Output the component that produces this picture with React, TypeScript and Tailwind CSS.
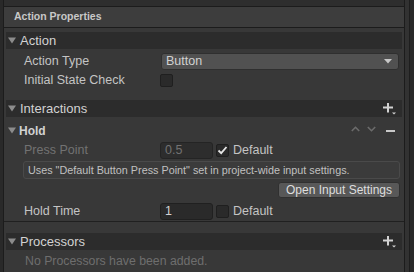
import React from "react";

const Fold = () => (
  <svg width="8" height="7" viewBox="0 0 8 7" className="shrink-0">
    <polygon points="0,0.5 8,0.5 4,6.5" fill="#8c8c8c" />
  </svg>
);

const Plus = () => (
  <svg width="13" height="12" viewBox="0 0 13 12">
    <rect x="0" y="3.5" width="10" height="2" fill="#d2d2d2" />
    <rect x="4" y="-0.5" width="2" height="10" fill="#d2d2d2" />
    <polygon points="9,9.5 13,9.5 11,11.5" fill="#d2d2d2" />
  </svg>
);

const Bar = ({ title, plus }: { title: string; plus?: boolean }) => (
  <div className="h-[17px] bg-[#2c2c2c] flex items-center pl-[2px] pr-[6px]">
    <Fold />
    <span className="ml-[4px] text-[13px] text-[#d2d2d2] leading-none">{title}</span>
    <div className="flex-1" />
    {plus && <Plus />}
  </div>
);

const Check = ({ checked }: { checked?: boolean }) => (
  <div className="w-[13px] h-[13px] rounded-[2px] bg-[#2a2a2a] border border-[#1f1f1f] flex items-center justify-center shrink-0">
    {checked && (
      <svg width="11" height="11" viewBox="0 0 11 11">
        <polyline points="1.5,5.5 4.2,8.2 9.5,2" fill="none" stroke="#e6e6e6" strokeWidth="1.8" />
      </svg>
    )}
  </div>
);

export default function App() {
  return (
    <div className="w-[414px] h-[272px] bg-[#292929] flex overflow-hidden font-['Liberation_Sans',Arial,sans-serif] text-[12.5px] text-[#c4c4c4]">
      <div className="w-[3px] shrink-0" />
      <div className="w-[402px] shrink-0 flex flex-col border-l border-r border-[#1c1c1c] bg-[#383838]">
        <div className="h-[6px] bg-[#2e2e2e] shrink-0" />
        <div className="h-[22px] shrink-0 border-t border-b border-[#1c1c1c] bg-[#3d3d3d] flex items-center pl-[10px]">
          <span className="text-[10.5px] font-bold text-[#c8c8c8]">Action Properties</span>
        </div>
        <div className="flex flex-col px-[2px]">
          <div className="mt-[4px]">
            <Bar title="Action" />
          </div>
          <div className="mt-[2px] h-[20px] flex items-center">
            <span className="w-[137px] ml-[18px] shrink-0">Action Type</span>
            <div className="w-[238px] h-[17px] rounded-[3px] bg-[#515151] border border-[#2f2f2f] flex items-center pl-[4px] pr-[6px]">
              <span className="text-[#d2d2d2]">Button</span>
              <div className="flex-1" />
              <svg width="8" height="5" viewBox="0 0 8 5">
                <polygon points="0,0 8,0 4,4.5" fill="#c8c8c8" />
              </svg>
            </div>
          </div>
          <div className="h-[18px] flex items-center">
            <span className="w-[136px] ml-[18px] shrink-0">Initial State Check</span>
            <Check />
          </div>
          <div className="mt-[11px]">
            <Bar title="Interactions" plus />
          </div>
          <div className="mt-[3px] h-[21px] flex items-center pl-[2px] pr-[7px]">
            <Fold />
            <span className="ml-[3px] font-bold text-[12px] text-[#d2d2d2]">Hold</span>
            <div className="flex-1" />
            <svg width="9" height="6" viewBox="0 0 9 6" className="mb-[3px]">
              <polyline points="0.8,5 4.5,1.3 8.2,5" fill="none" stroke="#6c6c6c" strokeWidth="1.6" />
            </svg>
            <svg width="9" height="6" viewBox="0 0 9 6" className="ml-[7px] mb-[3px]">
              <polyline points="0.8,1 4.5,4.7 8.2,1" fill="none" stroke="#6c6c6c" strokeWidth="1.6" />
            </svg>
            <svg width="9" height="2" viewBox="0 0 9 2" className="ml-[10px]">
              <rect x="0" y="0" width="9" height="2" fill="#c8c8c8" />
            </svg>
          </div>
          <div className="h-[19px] flex items-center">
            <span className="w-[136px] ml-[18px] shrink-0 text-[#727272]">Press Point</span>
            <div className="w-[53px] h-[17px] rounded-[3px] bg-[#2d2d2d] border border-[#242424] flex items-center pl-[4px] text-[#727272]">
              0.5
            </div>
            <div className="ml-[3px]">
              <Check checked />
            </div>
            <span className="ml-[4px]">Default</span>
          </div>
          <div className="mt-[1px] h-[18px] ml-[17px] mr-[2px] rounded-[3px] border border-[#4a4a4a] bg-[#3b3b3b] flex items-center pl-[4px] text-[10.8px] text-[#c0c0c0]">
            Uses "Default Button Press Point" set in project-wide input settings.
          </div>
          <div className="mt-[3px] flex justify-end mr-[2px]">
            <div className="w-[122px] h-[16px] rounded-[3px] bg-[#585858] border border-[#303030] flex items-center justify-center text-[12px] text-[#dedede]">
              Open Input Settings
            </div>
          </div>
          <div className="mt-[3px] h-[20px] flex items-center">
            <span className="w-[136px] ml-[18px] shrink-0">Hold Time</span>
            <div className="w-[53px] h-[17px] rounded-[3px] bg-[#2a2a2a] border border-[#202020] flex items-center pl-[4px] text-[#d2d2d2]">
              1
            </div>
            <div className="ml-[3px]">
              <Check />
            </div>
            <span className="ml-[4px]">Default</span>
          </div>
          <div className="-mx-[2px] h-[1px] bg-[#202020]" />
          <div className="mt-[11px]">
            <Bar title="Processors" plus />
          </div>
          <div className="h-[22px] flex items-center pl-[19px] text-[12.3px] text-[#6e6e6e]">
            No Processors have been added.
          </div>
        </div>
      </div>
      <div className="w-[4px] shrink-0 bg-[#323232]" />
      <div className="w-[1px] shrink-0 bg-[#1e1e1e]" />
      <div className="flex-1 bg-[#292929]" />
    </div>
  );
}
